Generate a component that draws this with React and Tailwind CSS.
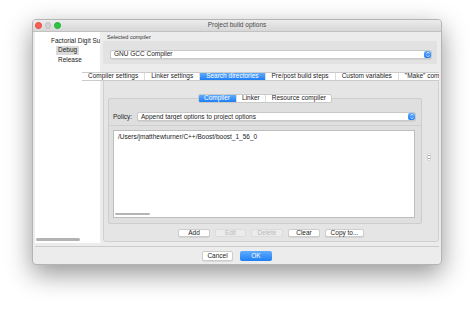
import React from "react";

// Tiny blue up/down stepper used by the mac combo boxes
const Stepper = () => (
	<div className="w-[7px] h-full rounded-[2px] bg-gradient-to-b from-[#62adfc] to-[#1c7cf3] flex items-center justify-center">
		<svg width="4" height="7" viewBox="0 0 4 7" fill="none">
			<path
				d="M0.7 2.6 L2 1.2 L3.3 2.6 M0.7 4.4 L2 5.8 L3.3 4.4"
				stroke="white"
				strokeWidth="0.8"
			/>
		</svg>
	</div>
);

const Combo = ({ text, className = "" }) => (
	<div
		className={`flex items-center bg-white border border-[#c9c9c9] rounded-[2px] shadow-[0_0.5px_0.5px_rgba(0,0,0,0.12)] ${className}`}
	>
		<span className="flex-1 pl-[3px] text-[6.5px] leading-none text-[#222] whitespace-nowrap overflow-hidden">
			{text}
		</span>
		<Stepper />
	</div>
);

const Button = ({ label, width, disabled, primary }) => (
	<div
		className={`${width} h-full flex items-center justify-center rounded-[2px] text-[6.5px] leading-none ${
			primary
				? "bg-gradient-to-b from-[#5eabfb] to-[#1b7ef4] text-white"
				: disabled
				? "bg-[#ececec] text-[#b9b9b9] border border-[#dcdcdc]"
				: "bg-white text-[#222] border border-[#cdcdcd] shadow-[0_0.5px_0.5px_rgba(0,0,0,0.15)]"
		}`}
	>
		{label}
	</div>
);

const mainTabs = [
	"Compiler settings",
	"Linker settings",
	"Search directories",
	"Pre/post build steps",
	"Custom variables",
	"\"Make\" commands",
];

const subTabs = ["Compiler", "Linker", "Resource compiler"];

export default function App() {
	return (
		<div className="w-[474px] h-[309px] bg-white overflow-hidden font-['Liberation_Sans',Arial,sans-serif]">
			<div className="ml-[32px] mt-[19px] w-[410px] h-[246px] flex flex-col bg-[#ececec] border border-[#b4b4b4] rounded-[4px] overflow-hidden shadow-[0_9px_26px_rgba(0,0,0,0.42)]">
				{/* title bar */}
				<div className="h-[12px] shrink-0 flex items-center bg-gradient-to-b from-[#ececec] to-[#d7d7d7] border-b border-[#c2c2c2]">
					<div className="w-[60px] flex items-center gap-[3px] pl-[2px]">
						<div className="w-[6.5px] h-[6.5px] rounded-full bg-[#fb5f57] border-[0.5px] border-[#e2463f]" />
						<div className="w-[6.5px] h-[6.5px] rounded-full bg-[#d3d3d3] border-[0.5px] border-[#c2c2c2]" />
						<div className="w-[6.5px] h-[6.5px] rounded-full bg-[#2ac73f] border-[0.5px] border-[#1dad2f]" />
					</div>
					<div className="flex-1 text-center text-[6.5px] leading-none text-[#4a4a4a]">
						Project build options
					</div>
					<div className="w-[60px]" />
				</div>

				{/* body */}
				<div className="h-[211px] shrink-0 flex pl-[2px]">
					{/* tree of targets */}
					<div className="w-[65px] h-full bg-white flex flex-col overflow-hidden text-[6.5px] text-[#222]">
						<div className="pt-[4px] pl-[16px] h-[13.5px] leading-[9.5px] whitespace-nowrap">
							Factorial Digit Sum
						</div>
						<div className="pl-[21px] h-[9.5px] flex items-center">
							<span className="px-[2px] h-[8.5px] leading-[8.5px] bg-[#dadada]">
								Debug
							</span>
						</div>
						<div className="pl-[23px] h-[10px] leading-[10px]">Release</div>
						<div className="mt-auto mb-[2px] ml-[1px] w-[44px] h-[3px] rounded-full bg-[#b3b3b3]" />
					</div>

					{/* right column */}
					<div className="ml-[3px] w-[336px] flex flex-col">
						<div className="h-[9px] pt-[3px] pl-[4px] flex items-center text-[5.5px] leading-none text-[#333]">
							Selected compiler
						</div>
						<div className="h-[23px] w-[334px] bg-[#e2e2e2] rounded-[2px] pl-[7px] pr-[5px] pt-[8.5px]">
							<Combo text="GNU GCC Compiler" className="h-[9.5px]" />
						</div>

						{/* main notebook tabs */}
						<div className="relative z-10 mt-[8px] ml-[-21px] w-[357px] h-[9px] flex bg-white border-y border-[#cbcbcb] overflow-hidden text-[6.5px] leading-none text-[#222]">
							{mainTabs.map((t, i) => (
								<div
									key={t}
									className={`shrink-0 px-[6px] flex items-center whitespace-nowrap border-r border-[#dcdcdc] ${
										i === 2
											? "bg-gradient-to-b from-[#5eabfb] to-[#1b7ef4] text-white border-[#1b7ef4]"
											: ""
									}`}
								>
									{t}
								</div>
							))}
						</div>

						{/* notebook page */}
						<div className="mt-[-4.5px] h-[165.5px] bg-[#e5e5e5] border border-[#d0d0d0] rounded-[3px] flex flex-col">
							<div className="flex pt-[16px]">
								<div className="ml-[4px] w-[314px] flex flex-col">
									<div className="relative z-10 h-[9.5px] flex justify-center">
										<div className="flex bg-white border border-[#c9c9c9] rounded-[2px] overflow-hidden text-[6.5px] leading-none text-[#222]">
											{subTabs.map((t, i) => (
												<div
													key={t}
													className={`px-[5.5px] flex items-center whitespace-nowrap border-r border-[#dcdcdc] last:border-r-0 ${
														i === 0
															? "bg-gradient-to-b from-[#5eabfb] to-[#1b7ef4] text-white"
															: ""
													}`}
												>
													{t}
												</div>
											))}
										</div>
									</div>
									<div className="mt-[-4.75px] h-[125.75px] bg-[#dfdfdf] border border-[#cdcdcd] rounded-[2px] flex flex-col pt-[13px]">
										<div className="h-[9px] flex items-center pl-[4px] pr-[5px]">
											<span className="w-[24px] text-[6.5px] leading-none text-[#222]">
												Policy:
											</span>
											<Combo
												text="Append target options to project options"
												className="flex-1 h-[9px]"
											/>
										</div>
										<div className="mt-[3.5px] h-px bg-[#cfcfcf]" />
										<div className="mt-[4.25px] ml-[4px] w-[302px] h-[88px] bg-white border border-[#bdbdbd] flex flex-col">
											<div className="pl-[4px] pt-[1px] h-[9px] leading-[9px] text-[6.5px] text-[#222] whitespace-nowrap">
												/Users/jmatthewturner/C++/Boost/boost_1_56_0
											</div>
											<div className="mt-auto mb-[2px] ml-[1px] w-[35px] h-[2.5px] rounded-full bg-[#b5b5b5]" />
										</div>
									</div>
								</div>
								{/* small spin control in the gutter */}
								<div className="ml-[5px] mt-[59.5px] w-[4px] h-[8px] rounded-[1.5px] bg-white border-[0.5px] border-[#cfcfcf] flex flex-col items-center justify-center gap-[1.5px]">
									<div className="w-[1.5px] h-[1.5px] rounded-full bg-[#999]" />
									<div className="w-[1.5px] h-[1.5px] rounded-full bg-[#999]" />
								</div>
							</div>
							<div className="mt-[5px] h-[8px] flex justify-center gap-[5px]">
								<Button label="Add" width="w-[32px]" />
								<Button label="Edit" width="w-[31px]" disabled />
								<Button label="Delete" width="w-[32px]" disabled />
								<Button label="Clear" width="w-[32px]" />
								<Button label="Copy to..." width="w-[39px]" />
							</div>
						</div>
					</div>
				</div>

				{/* separator + dialog buttons */}
				<div className="mt-[3px] mx-[2px] h-px bg-[#cbcbcb]" />
				<div className="mt-[4px] h-[10px] flex justify-center gap-[7px]">
					<Button label="Cancel" width="w-[31px]" />
					<Button label="OK" width="w-[32px]" primary />
				</div>
			</div>
		</div>
	);
}
